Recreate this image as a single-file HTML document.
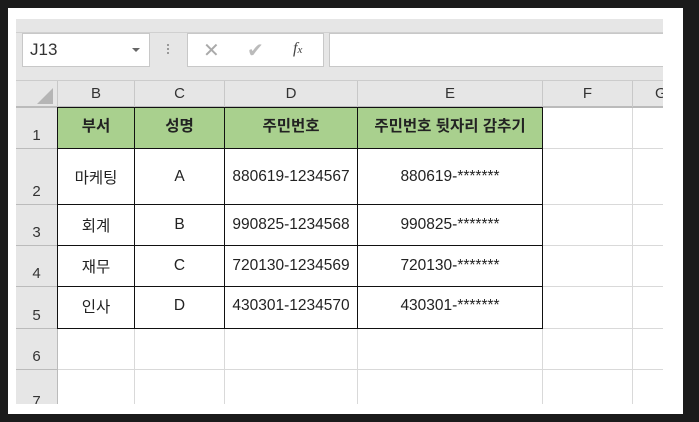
<!DOCTYPE html>
<html><head><meta charset="utf-8"><style>
*{margin:0;padding:0;box-sizing:border-box}
body{width:699px;height:422px;background:#1b1b1b;position:relative;overflow:hidden;font-family:"Liberation Sans","Noto Sans CJK KR",sans-serif}
.a{position:absolute}
.t{position:absolute;display:flex;align-items:center;justify-content:center;font-size:15.5px;color:#222;white-space:nowrap}
.h{position:absolute;display:flex;align-items:center;justify-content:center;font-size:15px;color:#333;background:#e6e6e6}
.r{position:absolute;display:flex;align-items:flex-end;justify-content:center;padding-bottom:4px;font-size:15px;color:#333;background:#e6e6e6}
</style></head><body>
<div class="a" style="left:8px;top:8px;width:675px;height:406px;background:#fff"></div>
<div class="a" style="left:16px;top:19px;width:647px;height:61px;background:#e6e6e6"></div>
<div class="a" style="left:16px;top:32px;width:647px;height:1px;background:#d0d0d0"></div>
<div class="a" style="left:22px;top:33px;width:128px;height:34px;background:#fff;border:1px solid #c8c8c8"></div>
<div class="a" style="left:30px;top:40px;font-size:17px;color:#333">J13</div>
<div class="a" style="left:132px;top:48px;width:0;height:0;border-left:4px solid transparent;border-right:4px solid transparent;border-top:4px solid #666"></div>
<div class="a" style="left:167px;top:44px;width:2px;height:2px;background:#999;box-shadow:0 4px 0 #999,0 8px 0 #999"></div>
<div class="a" style="left:187px;top:33px;width:137px;height:34px;background:#fff;border:1px solid #c8c8c8"></div>
<div class="a" style="left:203px;top:38px;font-size:20px;color:#aaa">✕</div>
<div class="a" style="left:247px;top:38px;font-size:20px;color:#bbb">✔</div>
<div class="a" style="left:293px;top:40px;font-size:16px;color:#444;font-family:'Liberation Serif',serif;font-style:italic">f<span style="font-size:11px">x</span></div>
<div class="a" style="left:329px;top:33px;width:334px;height:34px;background:#fff;border:1px solid #c8c8c8;border-right:none"></div>
<div class="a" style="left:16px;top:80px;width:647px;height:1px;background:#ccc"></div>
<div class="a" style="left:16px;top:81px;width:41px;height:26px;background:#e6e6e6"></div>
<div class="a" style="left:37px;top:88px;width:0;height:0;border-left:16px solid transparent;border-bottom:16px solid #b5b5b5"></div>
<div class="h" style="left:58px;top:81px;width:76px;height:25px">B</div>
<div class="h" style="left:135px;top:81px;width:89px;height:25px">C</div>
<div class="h" style="left:225px;top:81px;width:132px;height:25px">D</div>
<div class="h" style="left:358px;top:81px;width:184px;height:25px">E</div>
<div class="h" style="left:543px;top:81px;width:89px;height:25px">F</div>
<div class="h" style="left:633px;top:81px;width:30px;height:25px;overflow:hidden;justify-content:flex-start;padding-left:22px">G</div>
<div class="a" style="left:16px;top:106px;width:647px;height:2px;background:#bbb"></div>
<div class="a" style="left:57px;top:81px;width:1px;height:26px;background:#c8c8c8"></div>
<div class="a" style="left:134px;top:81px;width:1px;height:26px;background:#c8c8c8"></div>
<div class="a" style="left:224px;top:81px;width:1px;height:26px;background:#c8c8c8"></div>
<div class="a" style="left:357px;top:81px;width:1px;height:26px;background:#c8c8c8"></div>
<div class="a" style="left:542px;top:81px;width:1px;height:26px;background:#c8c8c8"></div>
<div class="a" style="left:632px;top:81px;width:1px;height:26px;background:#c8c8c8"></div>
<div class="r" style="left:16px;top:108px;width:41px;height:40px">1</div>
<div class="r" style="left:16px;top:149px;width:41px;height:55px">2</div>
<div class="r" style="left:16px;top:205px;width:41px;height:40px">3</div>
<div class="r" style="left:16px;top:246px;width:41px;height:40px">4</div>
<div class="r" style="left:16px;top:287px;width:41px;height:41px">5</div>
<div class="r" style="left:16px;top:329px;width:41px;height:40px">6</div>
<div class="r" style="left:16px;top:370px;width:41px;height:34px;padding-bottom:0;overflow:hidden"><span style="margin-bottom:-6px">7</span></div>
<div class="a" style="left:57px;top:108px;width:1px;height:296px;background:#bbb"></div>
<div class="a" style="left:58px;top:328px;width:605px;height:1px;background:#d9d9d9"></div>
<div class="a" style="left:58px;top:369px;width:605px;height:1px;background:#d9d9d9"></div>
<div class="a" style="left:543px;top:148px;width:120px;height:1px;background:#d9d9d9"></div>
<div class="a" style="left:543px;top:204px;width:120px;height:1px;background:#d9d9d9"></div>
<div class="a" style="left:543px;top:245px;width:120px;height:1px;background:#d9d9d9"></div>
<div class="a" style="left:543px;top:286px;width:120px;height:1px;background:#d9d9d9"></div>
<div class="a" style="left:632px;top:108px;width:1px;height:296px;background:#d9d9d9"></div>
<div class="a" style="left:134px;top:329px;width:1px;height:75px;background:#d9d9d9"></div>
<div class="a" style="left:224px;top:329px;width:1px;height:75px;background:#d9d9d9"></div>
<div class="a" style="left:357px;top:329px;width:1px;height:75px;background:#d9d9d9"></div>
<div class="a" style="left:542px;top:329px;width:1px;height:75px;background:#d9d9d9"></div>
<div class="a" style="left:16px;top:148px;width:41px;height:1px;background:#bbb"></div>
<div class="a" style="left:16px;top:204px;width:41px;height:1px;background:#bbb"></div>
<div class="a" style="left:16px;top:245px;width:41px;height:1px;background:#bbb"></div>
<div class="a" style="left:16px;top:286px;width:41px;height:1px;background:#bbb"></div>
<div class="a" style="left:16px;top:328px;width:41px;height:1px;background:#bbb"></div>
<div class="a" style="left:16px;top:369px;width:41px;height:1px;background:#bbb"></div>
<div class="a" style="left:58px;top:108px;width:484px;height:40px;background:#a9d08e"></div>
<div class="a" style="left:57px;top:107px;width:486px;height:222px;border:1px solid #111"></div>
<div class="a" style="left:58px;top:148px;width:484px;height:1px;background:#111"></div>
<div class="a" style="left:58px;top:204px;width:484px;height:1px;background:#111"></div>
<div class="a" style="left:58px;top:245px;width:484px;height:1px;background:#111"></div>
<div class="a" style="left:58px;top:286px;width:484px;height:1px;background:#111"></div>
<div class="a" style="left:134px;top:108px;width:1px;height:220px;background:#111"></div>
<div class="a" style="left:224px;top:108px;width:1px;height:220px;background:#111"></div>
<div class="a" style="left:357px;top:108px;width:1px;height:220px;background:#111"></div>
<div class="t" style="left:58px;top:108px;width:76px;height:40px;font-weight:bold;padding-bottom:6px">부서</div>
<div class="t" style="left:135px;top:108px;width:89px;height:40px;font-weight:bold;padding-bottom:6px">성명</div>
<div class="t" style="left:225px;top:108px;width:132px;height:40px;font-weight:bold;padding-bottom:6px">주민번호</div>
<div class="t" style="left:358px;top:108px;width:184px;height:40px;font-weight:bold;padding-bottom:6px">주민번호 뒷자리 감추기</div>
<div class="t" style="left:58px;top:149px;width:76px;height:55px">마케팅</div>
<div class="t" style="left:135px;top:149px;width:89px;height:55px">A</div>
<div class="t" style="left:225px;top:149px;width:132px;height:55px">880619-1234567</div>
<div class="t" style="left:358px;top:149px;width:184px;height:55px">880619-*******</div>
<div class="t" style="left:58px;top:205px;width:76px;height:40px">회계</div>
<div class="t" style="left:135px;top:205px;width:89px;height:40px">B</div>
<div class="t" style="left:225px;top:205px;width:132px;height:40px">990825-1234568</div>
<div class="t" style="left:358px;top:205px;width:184px;height:40px">990825-*******</div>
<div class="t" style="left:58px;top:246px;width:76px;height:40px">재무</div>
<div class="t" style="left:135px;top:246px;width:89px;height:40px">C</div>
<div class="t" style="left:225px;top:246px;width:132px;height:40px">720130-1234569</div>
<div class="t" style="left:358px;top:246px;width:184px;height:40px">720130-*******</div>
<div class="t" style="left:58px;top:287px;width:76px;height:41px;padding-bottom:4px">인사</div>
<div class="t" style="left:135px;top:287px;width:89px;height:41px;padding-bottom:4px">D</div>
<div class="t" style="left:225px;top:287px;width:132px;height:41px;padding-bottom:4px">430301-1234570</div>
<div class="t" style="left:358px;top:287px;width:184px;height:41px;padding-bottom:4px">430301-*******</div>
<div class="a" style="left:8px;top:404px;width:675px;height:10px;background:#fff"></div>
<div class="a" style="left:663px;top:19px;width:20px;height:395px;background:#fff"></div>
</body></html>
